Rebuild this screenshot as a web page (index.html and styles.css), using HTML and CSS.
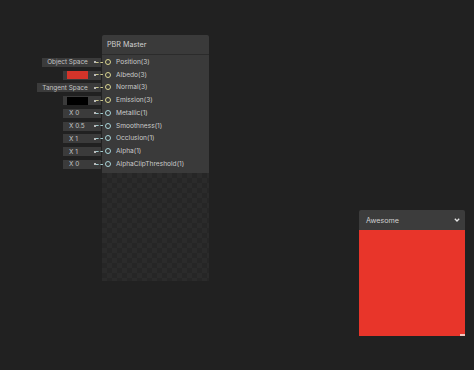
FILE: index.html
```html
<!DOCTYPE html>
<html>
<head>
<meta charset="utf-8">
<link rel="stylesheet" href="styles.css">
</head>
<body>
<div class="graph">
  <div class="inputs">
    <div class="in-row"><div class="field wide"><span class="ftext">Object Space</span><i class="dot"></i></div></div>
    <div class="in-row"><div class="field"><span class="swatch red"></span><i class="dot"></i></div></div>
    <div class="in-row"><div class="field wider"><span class="ftext">Tangent Space</span><i class="dot"></i></div></div>
    <div class="in-row"><div class="field"><span class="swatch black"></span><i class="dot"></i></div></div>
    <div class="in-row"><div class="field"><span class="xtext">X 0</span><i class="dot"></i></div></div>
    <div class="in-row"><div class="field"><span class="xtext">X 0.5</span><i class="dot"></i></div></div>
    <div class="in-row"><div class="field"><span class="xtext">X 1</span><i class="dot"></i></div></div>
    <div class="in-row"><div class="field"><span class="xtext">X 1</span><i class="dot"></i></div></div>
    <div class="in-row"><div class="field"><span class="xtext">X 0</span><i class="dot"></i></div></div>
  </div>

  <div class="node">
    <div class="node-header">PBR Master</div>
    <div class="ports">
      <div class="port-row v3"><span class="wire"></span><span class="port"></span><span class="label">Position(3)</span></div>
      <div class="port-row v3"><span class="wire"></span><span class="port"></span><span class="label">Albedo(3)</span></div>
      <div class="port-row v3"><span class="wire"></span><span class="port"></span><span class="label">Normal(3)</span></div>
      <div class="port-row v3"><span class="wire"></span><span class="port"></span><span class="label">Emission(3)</span></div>
      <div class="port-row v1"><span class="wire"></span><span class="port"></span><span class="label">Metallic(1)</span></div>
      <div class="port-row v1"><span class="wire"></span><span class="port"></span><span class="label">Smoothness(1)</span></div>
      <div class="port-row v1"><span class="wire"></span><span class="port"></span><span class="label">Occlusion(1)</span></div>
      <div class="port-row v1"><span class="wire"></span><span class="port"></span><span class="label">Alpha(1)</span></div>
      <div class="port-row v1"><span class="wire"></span><span class="port"></span><span class="label">AlphaClipThreshold(1)</span></div>
    </div>
    <div class="preview"></div>
  </div>

  <div class="panel">
    <div class="panel-header">
      <span class="panel-title">Awesome</span>
      <svg class="chev" width="6" height="4" viewBox="0 0 6 4"><path d="M0.8 0.8 L3 3 L5.2 0.8" fill="none" stroke="#e6e6e6" stroke-width="1.3"/></svg>
    </div>
    <div class="panel-body"><span class="grip"></span></div>
  </div>
</div>
</body>
</html>
```

FILE: styles.css
```css
html, body {
  margin: 0;
  padding: 0;
  background: #212121;
  width: 474px;
  height: 370px;
  overflow: hidden;
  font-family: "Inter", "Liberation Sans", sans-serif;
}
.graph {
  position: relative;
  width: 474px;
  height: 370px;
}
.inputs {
  position: absolute;
  left: 0;
  top: 56px;
  width: 102px;
  display: flex;
  flex-direction: column;
}
.in-row {
  height: 12.75px;
  display: flex;
  justify-content: flex-end;
  align-items: center;
  padding-right: 1px;
}
.field {
  width: 38px;
  height: 9px;
  background: #3b3b3b;
  display: flex;
  align-items: center;
  position: relative;
  box-sizing: border-box;
}
.field.wide { width: 59px; }
.field.wider { width: 64px; }
.ftext {
  font-size: 6.4px;
  color: #c4c4c4;
  flex: 1;
  text-align: center;
  padding-right: 8px;
  white-space: nowrap;
}
.xtext {
  font-size: 6.4px;
  color: #c4c4c4;
  padding-left: 6px;
  flex: 1;
  white-space: nowrap;
}
.swatch {
  width: 21px;
  height: 8px;
  margin-left: 4px;
}
.swatch.red { background: #d4342a; }
.swatch.black { background: #000; }
.dot {
  position: absolute;
  right: 5px;
  top: 3.5px;
  width: 2px;
  height: 2px;
  border-radius: 50%;
  background: #e6e6e6;
}
.node {
  position: absolute;
  left: 102px;
  top: 35px;
  width: 107px;
}
.node-header {
  height: 19px;
  background: #3a3a3a;
  border-bottom: 1px solid #2b2b2b;
  border-radius: 2px 2px 0 0;
  color: #cfcfcf;
  font-size: 7.2px;
  line-height: 19px;
  padding-left: 5px;
}
.ports {
  background: #3a3a3a;
  padding-top: 0.5px;
  height: 117px;
}
.port-row {
  height: 12.75px;
  display: flex;
  align-items: center;
  position: relative;
}
.wire {
  position: absolute;
  left: -6px;
  top: 6px;
  width: 7px;
  height: 0;
  border-top: 1px dashed #c9c58a;
}
.v1 .wire { border-top-color: #9fc9cc; }
.port {
  width: 4px;
  height: 4px;
  border: 1px solid #d9d48f;
  border-radius: 50%;
  margin-left: 3px;
  box-sizing: content-box;
}
.v1 .port { border-color: #a8d4d8; }
.label {
  font-size: 6.6px;
  color: #cacaca;
  margin-left: 5px;
  white-space: nowrap;
}
.preview {
  height: 108px;
  background-color: #262626;
  background-image:
    linear-gradient(45deg, #2b2b2b 25%, transparent 25%, transparent 75%, #2b2b2b 75%),
    linear-gradient(45deg, #2b2b2b 25%, transparent 25%, transparent 75%, #2b2b2b 75%);
  background-size: 10px 10px;
  background-position: 0 0, 5px 5px;
}
.panel {
  position: absolute;
  left: 359px;
  top: 210px;
  width: 106px;
}
.panel-header {
  height: 20px;
  background: #3c3c3c;
  border-radius: 2px 2px 0 0;
  display: flex;
  align-items: center;
  justify-content: space-between;
  padding: 0 5px 0 7px;
}
.panel-title {
  color: #cfcfcf;
  font-size: 7.2px;
}
.panel-body {
  height: 106px;
  background: #e8352a;
  position: relative;
}
.grip {
  position: absolute;
  right: 0;
  bottom: 0;
  width: 5px;
  height: 2px;
  background: #f3c6c0;
}
```
